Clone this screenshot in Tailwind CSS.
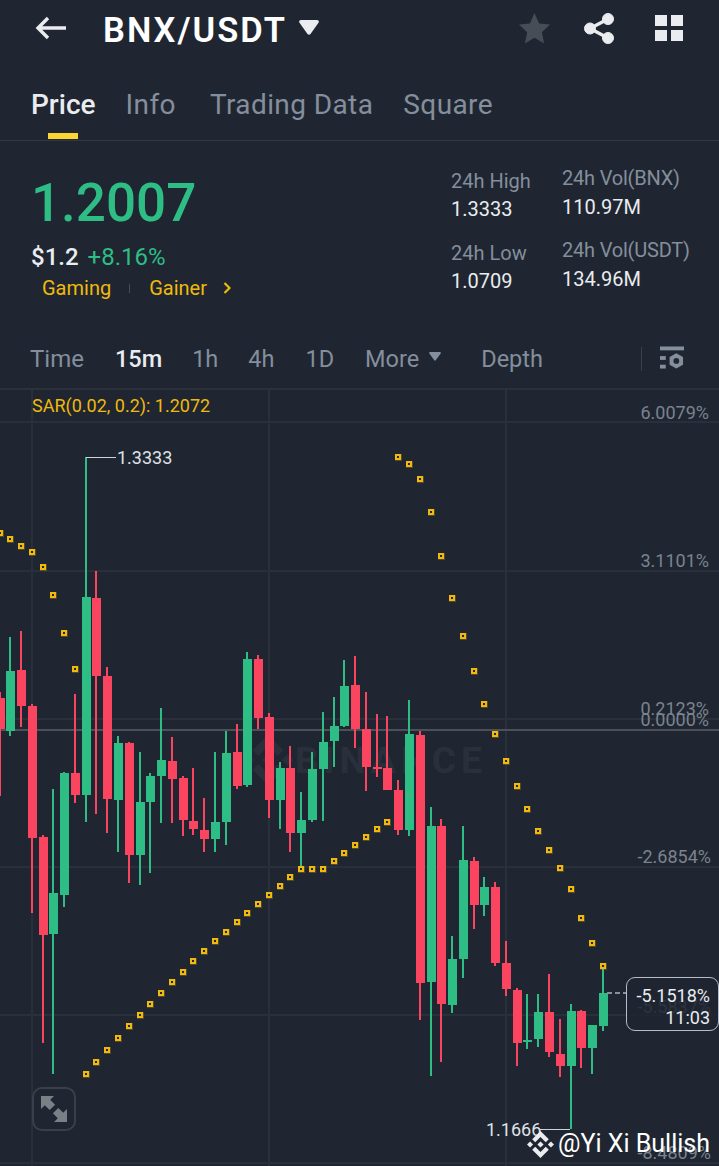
<!DOCTYPE html>
<html lang="en">
<head>
  <meta charset="UTF-8">
  <meta name="viewport" content="width=device-width, initial-scale=1.0">
  <title>BNX/USDT</title>
  <script src="https://cdn.jsdelivr.net/npm/@tailwindcss/browser@4"></script>
</head>
<body class="bg-[#1f2631] font-['Roboto',sans-serif] text-[#eaecef]">
  <div class="w-[719px] h-[1166px] overflow-hidden">

    <!-- header -->
    <header class="h-[60px] flex items-center">
      <svg class="ml-[35px] mb-[4px] w-[31px] h-[24px]" viewBox="0 0 31 24" fill="none" stroke="#eaecef" stroke-width="3.4">
        <path d="M31 12H3M13 2L3 12l10 10"/>
      </svg>
      <h1 class="ml-[37px] text-[34.5px] leading-[40px] font-semibold text-white tracking-[2px]">BNX/USDT</h1>
      <svg class="ml-[12px] mb-[6px] w-[20px] h-[15px]" viewBox="0 0 20 15" fill="#eaecef">
        <path d="M2 0h16c1.6 0 2.4 1.6 1.5 2.8L11.5 14c-.8 1-2.2 1-3 0L.5 2.8C-.4 1.6.4 0 2 0z"/>
      </svg>
      <svg class="ml-[200px] mb-[4px] w-[31px] h-[31px]" viewBox="0 0 31 31" fill="#474d57">
        <path d="M15.5 0l4.6 10.4 10.9 1.2-8.1 7.6 2.2 11.3-9.6-5.7-9.6 5.7 2.2-11.3L0 11.6l10.900-1.2z"/>
      </svg>
      <svg class="ml-[34px] mb-[4px] w-[30px] h-[31px]" viewBox="0 0 30 31" fill="#eaecef" stroke="#eaecef">
        <circle cx="24" cy="6" r="5.5"/>
        <circle cx="6" cy="15.5" r="5.5"/>
        <circle cx="24" cy="25" r="5.5"/>
        <path d="M24 6L6 15.5 24 25" fill="none" stroke-width="3.4"/>
      </svg>
      <div class="ml-[41px] mb-[4px] grid grid-cols-2 gap-[4px]">
        <div class="w-[12px] h-[11px] bg-[#eaecef]"></div>
        <div class="w-[12px] h-[11px] bg-[#eaecef]"></div>
        <div class="w-[12px] h-[11px] bg-[#eaecef]"></div>
        <div class="w-[12px] h-[11px] bg-[#eaecef]"></div>
      </div>
    </header>

    <!-- tabs -->
    <nav class="h-[81px] pt-[28px] pl-[31px] flex border-b border-[#323842] text-[28px] leading-[33px] text-[#848e9c] tracking-[0.4px]">
      <div class="relative font-medium text-[#eaecef] tracking-normal">Price
        <div class="absolute left-[17px] top-[45px] w-[30px] h-[6px] bg-[#fcd535]"></div>
      </div>
      <div class="ml-[30px]">Info</div>
      <div class="ml-[34px]">Trading Data</div>
      <div class="ml-[30px]">Square</div>
    </nav>

    <!-- price + stats -->
    <section class="h-[189px] flex">
      <div class="w-[420px] pl-[31px] pt-[32px]">
        <div class="text-[53px] leading-[60px] font-medium text-[#2ebd85]">1.2007</div>
        <div class="mt-[9px] flex gap-[9px] text-[24px] leading-[30px]">
          <span class="font-medium text-[#eaecef]">$1.2</span>
          <span class="text-[#2ebd85]">+8.16%</span>
        </div>
        <div class="mt-[3px] pl-[11px] flex items-center text-[20px] leading-[26px] text-[#f0b90b]">
          <span>Gaming</span>
          <span class="ml-[18px] w-[1px] h-[9px] bg-[#474d57]"></span>
          <span class="ml-[19px]">Gainer</span>
          <svg class="ml-[16px] w-[8px] h-[12px]" viewBox="0 0 8 12" fill="none" stroke="#f0b90b" stroke-width="2.2">
            <path d="M1.5 1l5 5-5 5"/>
          </svg>
        </div>
      </div>
      <div class="w-[111px] ml-[31px] pt-[28px] text-[20px] leading-[24px]">
        <div class="text-[#848e9c]">24h High</div>
        <div class="mt-[4px]">1.3333</div>
        <div class="mt-[20px] text-[#848e9c]">24h Low</div>
        <div class="mt-[4px]">1.0709</div>
      </div>
      <div class="pt-[25px] text-[20px] leading-[24px]">
        <div class="text-[#848e9c] tracking-[-0.2px]">24h Vol(BNX)</div>
        <div class="mt-[5px]">110.97M</div>
        <div class="mt-[19px] text-[#848e9c] tracking-[-0.2px]">24h Vol(USDT)</div>
        <div class="mt-[5px]">134.96M</div>
      </div>
    </section>

    <!-- intervals -->
    <div class="h-[60px] pl-[30px] flex items-center border-b-2 border-[#2b3139] text-[23.5px] leading-[30px] text-[#848e9c]">
      <span class="text-[24px]">Time</span>
      <span class="ml-[31px] font-medium text-[#eaecef]">15m</span>
      <span class="ml-[30px]">1h</span>
      <span class="ml-[30px]">4h</span>
      <span class="ml-[31px]">1D</span>
      <span class="ml-[31px]">More</span>
      <svg class="ml-[10px] mb-[5px] w-[12px] h-[9px]" viewBox="0 0 13 10" fill="#848e9c">
        <path d="M1 0h11c.9 0 1.3 1 .8 1.7L7.3 9.3c-.4.5-1.2.5-1.6 0L.2 1.7C-.3 1 .1 0 1 0z"/>
      </svg>
      <span class="ml-[40px]">Depth</span>
      <div class="ml-[98px] w-[1px] h-[24px] bg-[#3a404a]"></div>
      <svg class="ml-[18px] mb-[2px] w-[24px] h-[24px]" viewBox="0 0 25 24" fill="#848e9c">
        <rect x="0" y="0" width="25" height="4"/>
        <rect x="0" y="10" width="6" height="4"/>
        <rect x="0" y="19" width="6" height="4"/>
        <path fill-rule="evenodd" d="M17 7l7 4v8l-7 4-7-4v-8zM17 12a3 3 0 100 6 3 3 0 000-6z"/>
      </svg>
    </div>

    <!-- chart -->
    <div class="relative h-[776px] text-[18px] leading-[22px] text-[#7b838f]">
      <svg id="chart" class="absolute left-0 top-0 w-[719px] h-[776px]" viewBox="0 390 719 776" shape-rendering="crispEdges">
        <g fill="#2a303b">
          <rect x="0" y="421" width="719" height="2"/>
          <rect x="0" y="570" width="719" height="2"/>
          <rect x="0" y="718" width="719" height="2"/>
          <rect x="0" y="866" width="719" height="2"/>
          <rect x="0" y="1014" width="719" height="2"/>
          <rect x="0" y="1162" width="719" height="2"/>
          <rect x="31" y="390" width="2" height="776"/>
          <rect x="268" y="390" width="2" height="776"/>
          <rect x="505" y="390" width="2" height="776"/>
        </g>
        <svg x="243" y="735" width="50" height="50" viewBox="0 0 126.61 126.61" fill="#2a303b" shape-rendering="auto">
          <path d="M38.73 53.2L63.3 28.63 87.9 53.2l14.3-14.3L63.3 0 24.42 38.9zM0 63.31L14.3 49l14.31 14.31-14.31 14.3zM38.73 73.41L63.3 97.98l24.59-24.57 14.31 14.29-38.9 38.91-38.91-38.88zM97.99 63.31L112.29 49l14.32 14.3-14.31 14.3zM77.83 63.3L63.3 48.78 48.81 63.27l14.49 14.5z"/>
        </svg>
        <text x="295" y="773" font-family="Roboto" font-size="37" font-weight="700" letter-spacing="5" fill="#2a303b" shape-rendering="auto">BINANCE</text>
        <rect x="0" y="729" width="719" height="2" fill="#4c5159"/>
        <g id="candles"></g>
        <g id="sar"></g>
        <path d="M86 457.5H116M540 1129.5H570" stroke="#cfd3d8" stroke-width="1" fill="none"/>
        <path d="M607 993H627" stroke="#8b9098" stroke-width="1.5" stroke-dasharray="5 3" fill="none"/>
      </svg>

      <div class="absolute left-[32px] top-[5px] text-[#f0b90b]">SAR(0.02, 0.2): 1.2072</div>

      <div class="absolute right-[10px] top-[12px]">6.0079%</div>
      <div class="absolute right-[10px] top-[160px]">3.1101%</div>
      <div class="absolute right-[10px] top-[308px]">0.2123%</div>
      <div class="absolute right-[10px] top-[319px]">0.0000%</div>
      <div class="absolute right-[8px] top-[456px]">-2.6854%</div>
      <div class="absolute right-[8px] top-[606px]">-5.5837%</div>
      <div class="absolute right-[8px] top-[752px]">-8.4809%</div>

      <div class="absolute left-[117px] top-[57px] text-[#dfe2e6]">1.3333</div>
      <div class="absolute left-[486px] top-[729px] text-[#dfe2e6]">1.1666</div>

      <!-- live price tag -->
      <div class="absolute left-[626px] top-[587px] w-[93px] h-[54px] pr-[8px] pt-[7px] text-right rounded-[9px] border border-[#b7bdc6] bg-[#1f2631]/85 text-[#eaecef]">
        <div>-5.1518%</div>
        <div>11:03</div>
      </div>

      <!-- expand button -->
      <div class="absolute left-[32px] top-[697px] w-[44px] h-[44px] flex items-center justify-center rounded-[10px] border-2 border-[#3a404a]">
        <svg class="w-[26px] h-[26px]" viewBox="0 0 24 24" fill="#7b8087">
          <path d="M0 0h12L8.5 3.5 13 8l-5 5-4.500-4.500L0 12zM24 24H12l3.500-3.500L11 16l5-5 4.500 4.500L24 12z"/>
        </svg>
      </div>

      <!-- watermark -->
      <div class="absolute left-[527px] top-[739px] flex items-center gap-[4px] text-[25px] leading-[30px] text-white">
        <svg class="w-[27px] h-[27px]" viewBox="0 0 126.61 126.61" fill="#eaecef">
          <path d="M38.73 53.2L63.3 28.63 87.9 53.2l14.3-14.3L63.3 0 24.42 38.9zM0 63.31L14.3 49l14.31 14.31-14.31 14.3zM38.73 73.41L63.3 97.98l24.59-24.57 14.31 14.29-38.9 38.91-38.91-38.88zM97.99 63.31L112.29 49l14.32 14.3-14.31 14.3zM77.83 63.3L63.3 48.78 48.81 63.27l14.49 14.5z"/>
        </svg>
        <span>@Yi Xi Bullish</span>
      </div>
    </div>
  </div>

  <script>
    const NS = 'http://www.w3.org/2000/svg';
    const GREEN = '#2ebd85';
    const RED = '#fb4560';

    // [colour, wick top, body top, body bottom, wick bottom]
    const candles = [
      ['r',692,698,729,796],['g',637,671,731,736],['r',631,670,706,727],['r',704,706,838,913],
      ['r',835,837,935,1043],['g',789,893,934,1074],['g',772,773,895,907],['r',694,773,795,803],
      ['g',457,597,795,822],['r',571,598,676,814],['r',667,676,799,833],['g',736,743,800,852],
      ['r',742,743,855,883],['g',752,802,855,885],['g',773,776,802,873],['g',708,760,776,823],
      ['r',737,761,779,823],['r',776,778,820,836],['r',768,821,829,835],['r',798,830,839,852],
      ['g',752,822,839,852],['g',731,753,822,845],['r',724,752,786,789],['g',652,659,785,787],
      ['r',655,659,718,729],['r',713,717,800,818],['g',762,768,800,829],['r',746,768,833,852],
      ['g',792,820,833,868],['g',752,769,820,822],['g',712,742,769,821],['g',697,726,741,767],
      ['g',660,686,726,727],['r',656,685,729,748],['r',692,729,767,791],['r',714,767,769,777],
      ['r',716,768,790,790],['r',780,790,830,835],['g',700,734,830,836],['r',731,735,983,1020],
      ['g',807,826,982,1076],['r',819,826,1004,1062],['g',936,959,1005,1013],['g',826,860,959,978],
      ['r',857,861,905,929],['g',877,887,905,916],['r',882,887,963,966],['r',941,963,989,996],
      ['r',988,990,1043,1066],['g',994,1040,1042,1049],['g',994,1012,1039,1047],['r',974,1012,1052,1057],
      ['r',1019,1054,1066,1077],['g',1004,1011,1066,1129],['r',1010,1011,1048,1068],['g',1025,1025,1048,1074],
      ['g',968,993,1026,1031],
    ];

    // SAR points, by candle index
    const sar = [
      [0,[533,539,546,552,567,595,633,669]],
      [8,[1074,1062,1050,1038,1026,1015,1004,993,982,972,961,951,941,932,922,913,904,895,886,877,869,869,869,861,853,845,837,829,822]],
      [37,[457,464,479,512,556,598,636,671,704,734,761,786,809,831,850,868,889,918,943,966]],
    ];

    const centre = (i) => Math.round(-0.5 + 10.775 * i);

    function addRect(parent, x, y, w, h, fill, opacity) {
      const r = document.createElementNS(NS, 'rect');
      r.setAttribute('x', x);
      r.setAttribute('y', y);
      r.setAttribute('width', w);
      r.setAttribute('height', h);
      r.setAttribute('fill', fill);
      if (opacity) r.setAttribute('opacity', opacity);
      parent.appendChild(r);
    }

    const candleGroup = document.getElementById('candles');
    candles.forEach(([c, wt, bt, bb, wb], i) => {
      const fill = c === 'g' ? GREEN : RED;
      const x = centre(i);
      addRect(candleGroup, x - 1, wt, 2, wb - wt, fill);
      addRect(candleGroup, x - 4, bt, 9, Math.max(bb - bt, 2), fill);
    });

    const sarGroup = document.getElementById('sar');
    sar.forEach(([start, ys]) => {
      ys.forEach((y, n) => {
        const x = centre(start + n);
        addRect(sarGroup, x - 3, y - 3, 7, 7, '#f0b90b', 0.25);
        addRect(sarGroup, x - 3, y - 3, 6, 6, '#f0b90b');
        addRect(sarGroup, x - 1, y - 1, 2, 2, '#1f2631');
      });
    });
  </script>
</body>
</html>
